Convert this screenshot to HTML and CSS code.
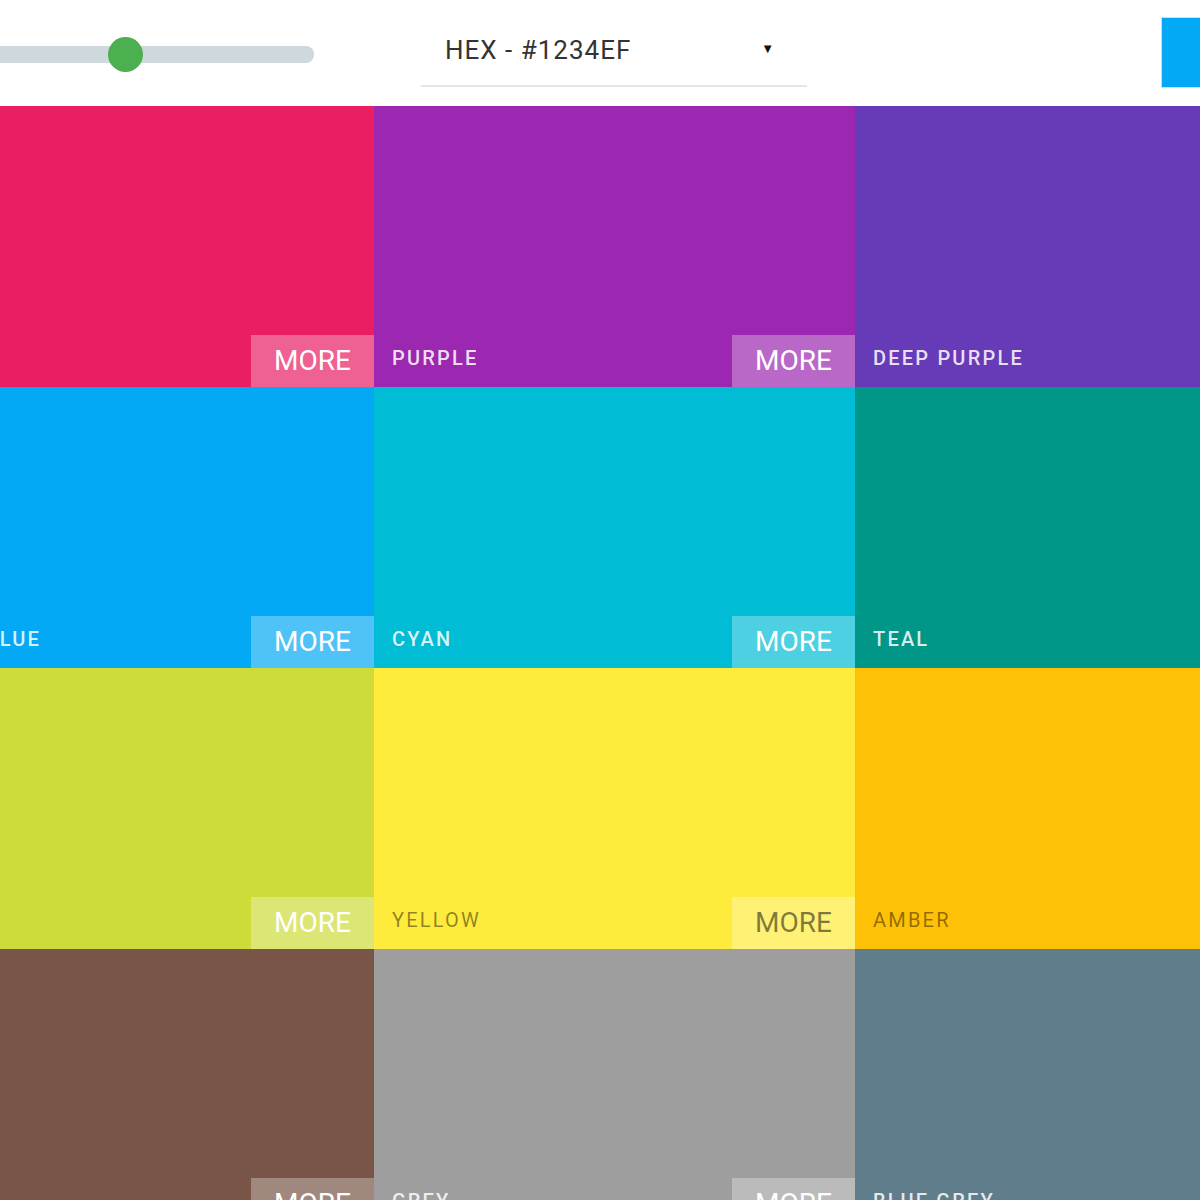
FILE: index.html
```html
<!DOCTYPE html>
<html>

<head>
  <link rel="stylesheet" href="styles.css">
</head>

<body>
  <div class="page">
    <div class="toolbar">
      <div class="slider">
        <div class="slider-thumb"></div>
      </div>
      <div class="format-select">
        <span class="format-value">HEX - #1234EF</span>
        <span class="format-arrow">&#9660;</span>
      </div>
      <button class="copy-button"></button>
    </div>

    <div class="palette">
      <div class="swatch pink">
        <span class="swatch-name">PINK</span>
        <span class="more">MORE</span>
      </div>
      <div class="swatch purple">
        <span class="swatch-name">PURPLE</span>
        <span class="more">MORE</span>
      </div>
      <div class="swatch deep-purple">
        <span class="swatch-name">DEEP PURPLE</span>
        <span class="more">MORE</span>
      </div>

      <div class="swatch light-blue">
        <span class="swatch-name">LIGHT BLUE</span>
        <span class="more">MORE</span>
      </div>
      <div class="swatch cyan">
        <span class="swatch-name">CYAN</span>
        <span class="more">MORE</span>
      </div>
      <div class="swatch teal">
        <span class="swatch-name">TEAL</span>
        <span class="more">MORE</span>
      </div>

      <div class="swatch lime">
        <span class="swatch-name">LIME</span>
        <span class="more">MORE</span>
      </div>
      <div class="swatch yellow dark-text">
        <span class="swatch-name">YELLOW</span>
        <span class="more">MORE</span>
      </div>
      <div class="swatch amber dark-text">
        <span class="swatch-name">AMBER</span>
        <span class="more">MORE</span>
      </div>

      <div class="swatch brown">
        <span class="swatch-name">BROWN</span>
        <span class="more">MORE</span>
      </div>
      <div class="swatch grey">
        <span class="swatch-name">GREY</span>
        <span class="more">MORE</span>
      </div>
      <div class="swatch blue-grey">
        <span class="swatch-name">BLUE GREY</span>
        <span class="more">MORE</span>
      </div>
    </div>
  </div>
</body>

</html>
```

FILE: styles.css
```css
html,
body {
  margin: 0;
  overflow: hidden;
  background: #fff;
  font-family: 'Roboto', 'Liberation Sans', sans-serif;
}

.page {
  width: 1443px;
  margin-left: -107px;
}

.toolbar {
  display: flex;
  align-items: center;
  height: 106px;
  padding-left: 21px;
  box-sizing: border-box;
}

.slider {
  position: relative;
  width: 400px;
  height: 17px;
  border-radius: 8px;
  background-color: #CFD8DC;
  margin-top: 2px;
}

.slider-thumb {
  position: absolute;
  left: 194px;
  top: -9px;
  width: 35px;
  height: 35px;
  border-radius: 50%;
  background-color: #4CAF50;
}

.format-select {
  display: flex;
  align-items: center;
  justify-content: space-between;
  width: 386px;
  height: 66px;
  margin-left: 107px;
  margin-top: 2px;
  padding: 0 33px 6px 24px;
  box-sizing: border-box;
  border-bottom: 2px solid #E6E6E6;
  color: #333;
}

.format-value {
  font-size: 26px;
  letter-spacing: 1px;
}

.format-arrow {
  font-size: 13px;
  margin-top: -4px;
  color: #111;
}

.copy-button {
  width: 150px;
  height: 71px;
  margin-left: 354px;
  margin-top: -1px;
  border: 1px solid #B3E5FC;
  background-color: #03A9F4;
  padding: 0;
}

.palette {
  display: grid;
  grid-template-columns: repeat(3, 481px);
  grid-auto-rows: 281px;
}

.swatch {
  display: flex;
  justify-content: space-between;
  align-items: flex-end;
  color: #fff;
}

.swatch-name {
  padding: 0 0 17px 18px;
  font-size: 20px;
  font-weight: 500;
  letter-spacing: 2.2px;
  color: rgba(255, 255, 255, 0.85);
}

.more {
  width: 123px;
  height: 52px;
  line-height: 52px;
  padding-right: 23px;
  box-sizing: border-box;
  text-align: right;
  font-size: 28px;
  background-color: rgba(255, 255, 255, 0.3);
}

.dark-text .swatch-name {
  color: rgba(0, 0, 0, 0.45);
  font-weight: 400;
}

.dark-text .more {
  color: rgba(0, 0, 0, 0.5);
}

.pink { background-color: #E91E63; }
.purple { background-color: #9C27B0; }
.deep-purple { background-color: #673AB7; }
.light-blue { background-color: #03A9F4; }
.cyan { background-color: #00BCD4; }
.teal { background-color: #009688; }
.lime { background-color: #CDDC39; }
.yellow { background-color: #FFEB3B; }
.amber { background-color: #FFC107; }
.brown { background-color: #795548; }
.grey { background-color: #9E9E9E; }
.blue-grey { background-color: #607D8B; }
```
